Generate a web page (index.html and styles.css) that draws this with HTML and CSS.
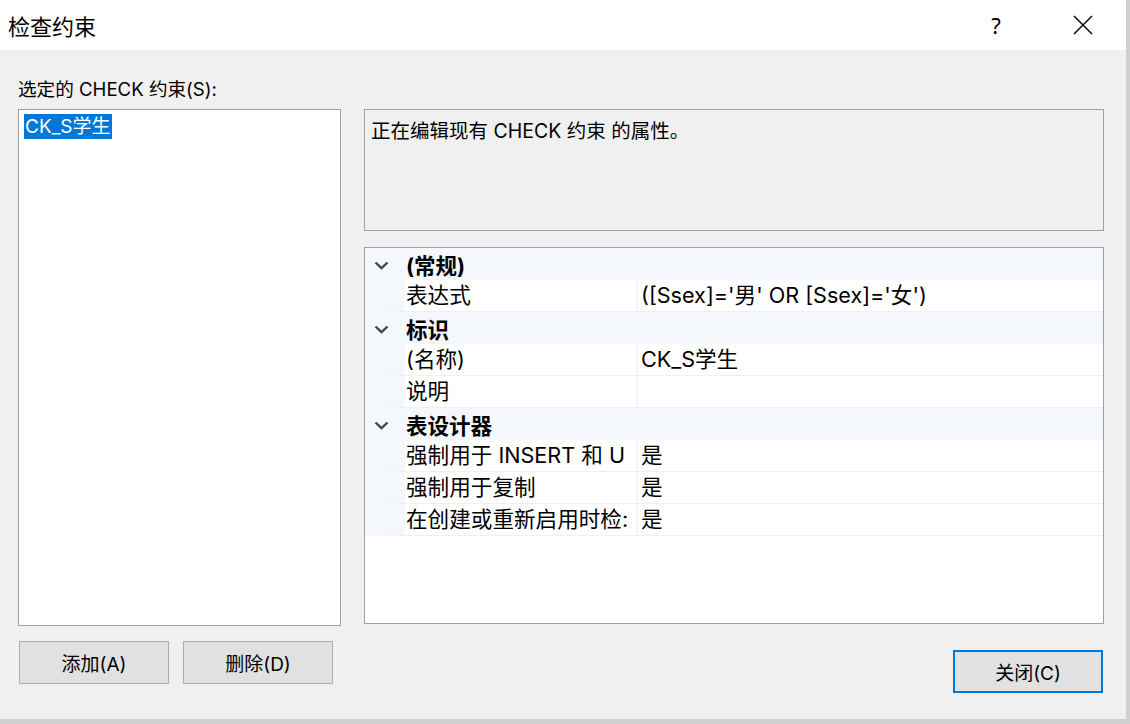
FILE: index.html
```html
<!DOCTYPE html>
<html lang="zh-CN">
<head>
    <meta charset="UTF-8">
    <title>检查约束</title>
    <link rel="stylesheet" href="styles.css">
</head>
<body>

    <div class="dialog">
        <div class="titlebar">
            <span class="title">检查约束</span>
            <span class="help">?</span>
            <span class="close-x">
                <svg width="20" height="20" viewBox="0 0 20 20"><path d="M1 1 L19 19 M19 1 L1 19" stroke="#111" stroke-width="1.6" fill="none"/></svg>
            </span>
        </div>

        <div class="content">
            <p class="label">选定的 CHECK 约束(S):</p>

            <div class="main">
                <div class="left-col">
                    <div class="listbox">
                        <span class="list-item selected">CK_S学生</span>
                    </div>
                    <div class="button-row">
                        <button class="btn">添加(A)</button>
                        <button class="btn">删除(D)</button>
                    </div>
                </div>

                <div class="right-col">
                    <div class="description">正在编辑现有 CHECK 约束 的属性。</div>

                    <div class="grid">
                        <div class="category">
                            <span class="chevron"><svg width="15" height="9" viewBox="0 0 15 9"><polyline points="1.5,1.5 7.5,7.2 13.5,1.5" stroke="#454545" stroke-width="2.4" fill="none"/></svg></span>
                            <span class="cat-name">(常规)</span>
                        </div>
                        <div class="prop">
                            <span class="prop-name">表达式</span>
                            <span class="prop-value">([Ssex]='男' OR [Ssex]='女')</span>
                        </div>

                        <div class="category">
                            <span class="chevron"><svg width="15" height="9" viewBox="0 0 15 9"><polyline points="1.5,1.5 7.5,7.2 13.5,1.5" stroke="#454545" stroke-width="2.4" fill="none"/></svg></span>
                            <span class="cat-name">标识</span>
                        </div>
                        <div class="prop">
                            <span class="prop-name">(名称)</span>
                            <span class="prop-value">CK_S学生</span>
                        </div>
                        <div class="prop">
                            <span class="prop-name">说明</span>
                            <span class="prop-value"></span>
                        </div>

                        <div class="category">
                            <span class="chevron"><svg width="15" height="9" viewBox="0 0 15 9"><polyline points="1.5,1.5 7.5,7.2 13.5,1.5" stroke="#454545" stroke-width="2.4" fill="none"/></svg></span>
                            <span class="cat-name">表设计器</span>
                        </div>
                        <div class="prop">
                            <span class="prop-name">强制用于 INSERT 和 U</span>
                            <span class="prop-value">是</span>
                        </div>
                        <div class="prop">
                            <span class="prop-name">强制用于复制</span>
                            <span class="prop-value">是</span>
                        </div>
                        <div class="prop">
                            <span class="prop-name">在创建或重新启用时检:</span>
                            <span class="prop-value">是</span>
                        </div>
                    </div>

                    <div class="close-row">
                        <button class="btn btn-default">关闭(C)</button>
                    </div>
                </div>
            </div>
        </div>
    </div>

</body>
</html>
```

FILE: styles.css
```css
body {
    margin: 0;
    padding: 0;
    background-color: #cfcfcf;
    font-family: Inter, "Noto Sans CJK SC", sans-serif;
    color: #000;
}
.dialog {
    width: 1126px;
    height: 719px;
    background-color: #f0f0f0;
    overflow: hidden;
}
.titlebar {
    height: 50px;
    background-color: #fff;
    display: flex;
    align-items: center;
}
.title {
    font-family: "Noto Sans CJK SC", sans-serif;
    font-size: 22px;
    margin-left: 8px;
    flex: 1;
}
.help {
    font-family: "Noto Sans", sans-serif;
    font-size: 22px;
    width: 56px;
    text-align: center;
    margin-right: 30px;
}
.close-x {
    width: 58px;
    display: flex;
    justify-content: center;
    margin-right: 14px;
}
.content {
    padding: 0 22px 0 18px;
}
.label {
    margin: 24px 0 0 0;
    height: 35px;
    font-size: 18.6px;
}
.main {
    display: flex;
    gap: 23px;
}
.left-col {
    width: 323px;
}
.listbox {
    height: 517px;
    box-sizing: border-box;
    background-color: #fff;
    border: 1px solid #a0a0a0;
    padding: 4px 5px;
}
.list-item {
    font-size: 19px;
    line-height: 25px;
    display: inline-block;
    padding: 0 1px;
}
.selected {
    background-color: #0078d7;
    color: #fff;
}
.button-row {
    display: flex;
    gap: 14px;
    margin-top: 15px;
    padding-left: 1px;
}
.btn {
    width: 150px;
    height: 43px;
    background-color: #e1e1e1;
    border: 1px solid #adadad;
    font-family: Inter, "Noto Sans CJK SC", sans-serif;
    font-size: 19px;
    color: #000;
    padding: 0;
}
.btn-default {
    border: 2px solid #0078d7;
}
.right-col {
    width: 740px;
}
.description {
    height: 122px;
    box-sizing: border-box;
    border: 1px solid #a0a0a0;
    padding: 5px 6px;
    font-size: 19.5px;
}
.grid {
    margin-top: 16px;
    height: 377px;
    box-sizing: border-box;
    border: 1px solid #a0a0a0;
    background-color: #fff;
}
.category {
    display: flex;
    align-items: center;
    height: 32px;
    background-color: #f4f7fc;
}
.chevron {
    width: 32px;
    display: flex;
    justify-content: center;
    padding-top: 2px;
}
.cat-name {
    font-weight: bold;
    font-size: 21.5px;
    padding-left: 9px;
}
.prop {
    display: flex;
    height: 32px;
    border-left: 40px solid #f4f7fc;
    border-bottom: 1px solid #f0f0f0;
    box-sizing: border-box;
    font-size: 21.6px;
}
.prop-name {
    width: 231px;
    overflow: hidden;
    white-space: nowrap;
    padding-left: 1px;
    border-right: 1px solid #f0f0f0;
    line-height: 31px;
}
.prop-value {
    padding-left: 3px;
    line-height: 31px;
    white-space: nowrap;
}
.close-row {
    display: flex;
    justify-content: flex-end;
    margin-top: 26px;
    padding-right: 1px;
}
```
